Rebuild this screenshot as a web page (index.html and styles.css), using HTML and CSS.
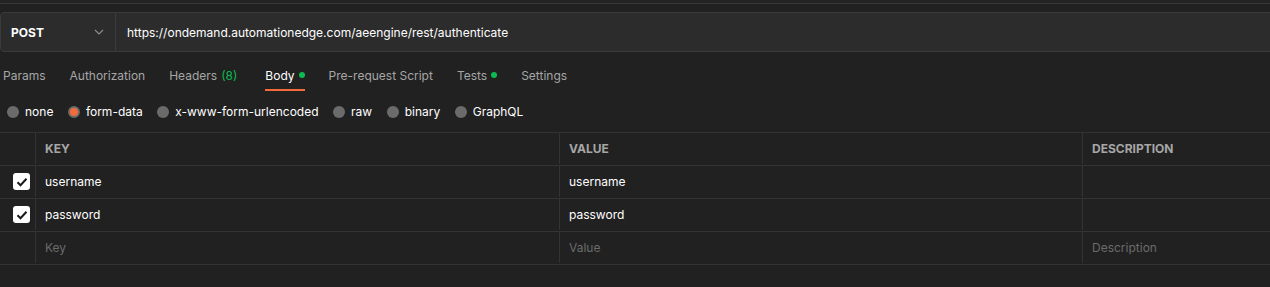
FILE: index.html
```html
<!DOCTYPE html>
<html lang="en">
<head>
  <meta charset="UTF-8" />
  <title>Request builder</title>
  <link rel="stylesheet" href="styles.css">
</head>
<body>
  <div class="topline"></div>

  <div class="url-bar">
    <div class="method">
      <span>POST</span>
      <svg class="chevron" width="10" height="6" viewBox="0 0 10 6"><path d="M1 1l4 4 4-4" fill="none" stroke="#8c8c8c" stroke-width="1.2"/></svg>
    </div>
    <div class="url">https://ondemand.automationedge.com/aeengine/rest/authenticate</div>
  </div>

  <div class="tabs">
    <div class="tab">Params</div>
    <div class="tab">Authorization</div>
    <div class="tab">Headers <span class="count">(8)</span></div>
    <div class="tab active">Body <span class="dot"></span></div>
    <div class="tab">Pre-request Script</div>
    <div class="tab">Tests <span class="dot"></span></div>
    <div class="tab">Settings</div>
  </div>

  <div class="body-types">
    <label class="radio"><span class="circle"></span>none</label>
    <label class="radio on"><span class="circle"></span>form-data</label>
    <label class="radio"><span class="circle"></span>x-www-form-urlencoded</label>
    <label class="radio"><span class="circle"></span>raw</label>
    <label class="radio"><span class="circle"></span>binary</label>
    <label class="radio"><span class="circle"></span>GraphQL</label>
  </div>

  <div class="params">
    <div class="row head">
      <div class="cell check"></div>
      <div class="cell key">KEY</div>
      <div class="cell value">VALUE</div>
      <div class="cell desc">DESCRIPTION</div>
    </div>
    <div class="row">
      <div class="cell check"><span class="box"><svg width="12" height="10" viewBox="0 0 12 10"><path d="M1.5 5.2l3 3 6-6.5" fill="none" stroke="#1a1a1a" stroke-width="2"/></svg></span></div>
      <div class="cell key">username</div>
      <div class="cell value">username</div>
      <div class="cell desc"></div>
    </div>
    <div class="row">
      <div class="cell check"><span class="box"><svg width="12" height="10" viewBox="0 0 12 10"><path d="M1.5 5.2l3 3 6-6.5" fill="none" stroke="#1a1a1a" stroke-width="2"/></svg></span></div>
      <div class="cell key">password</div>
      <div class="cell value">password</div>
      <div class="cell desc"></div>
    </div>
    <div class="row empty">
      <div class="cell check"></div>
      <div class="cell key">Key</div>
      <div class="cell value">Value</div>
      <div class="cell desc">Description</div>
    </div>
  </div>
</body>
</html>
```

FILE: styles.css
```css
* { box-sizing: border-box; }

body {
  margin: 0;
  width: 1270px;
  height: 287px;
  overflow: hidden;
  background: #212121;
  color: #e6e6e6;
  font-family: Inter, "Noto Sans", sans-serif;
  font-size: 12px;
}

.topline {
  height: 4px;
  border-bottom: 1px solid #363636;
  background: #242424;
}

.url-bar {
  display: flex;
  height: 40px;
  margin-top: 8px;
  width: 1280px;
  background: #2c2c2c;
  border: 1px solid #3b3b3b;
  border-radius: 4px;
}

.method {
  width: 115px;
  display: flex;
  align-items: center;
  justify-content: space-between;
  padding: 0 11px 0 10px;
  border-right: 1px solid #3b3b3b;
  font-weight: 700;
  color: #fff;
}

.url {
  display: flex;
  align-items: center;
  padding-left: 11px;
  color: #fff;
}

.tabs {
  display: flex;
  margin-top: 9px;
  margin-left: -9px;
  height: 30px;
}

.tab {
  display: flex;
  align-items: center;
  gap: 4px;
  padding: 0 12px;
  font-size: 12px;
  color: #a6a6a6;
  border-bottom: 2px solid transparent;
}

.tab.active {
  color: #fff;
  border-image: linear-gradient(to right, transparent 12px, #f26b3a 12px, #f26b3a calc(100% - 12px), transparent calc(100% - 12px)) 1;
}

.count { color: #0cbb52; margin-right: 4px; }

.dot {
  width: 6px;
  height: 6px;
  border-radius: 50%;
  background: #0cbb52;
}

.body-types {
  display: flex;
  align-items: center;
  height: 41px;
  padding-left: 7px;
}

.radio {
  display: flex;
  align-items: center;
  gap: 6px;
  margin-right: 14.5px;
  font-size: 12px;
  color: #fff;
}

.circle {
  width: 12px;
  height: 12px;
  border-radius: 50%;
  background: #6b6b6b;
}

.radio.on .circle {
  background: #f26b3a;
  border: 2px solid #6b6b6b;
}

.params {
  width: 1290px;
  border-top: 1px solid #333;
}

.row {
  display: flex;
  height: 33px;
  padding-bottom: 1px;
  border-bottom: 1px solid #333;
}

.cell {
  display: flex;
  align-items: center;
  padding-left: 9px;
  border-right: 1px solid #333;
  color: #fff;
}

.cell.check { width: 36px; padding-left: 13px; }
.cell.key { width: 524px; }
.cell.value { width: 523px; }
.cell.desc { flex: 1; border-right: none; }

.head .cell {
  font-weight: 700;
  color: #a6a6a6;
}

.empty .cell { color: #6b6b6b; }

.box {
  width: 17px;
  height: 17px;
  border-radius: 3px;
  background: #fff;
  display: flex;
  align-items: center;
  justify-content: center;
}
```
